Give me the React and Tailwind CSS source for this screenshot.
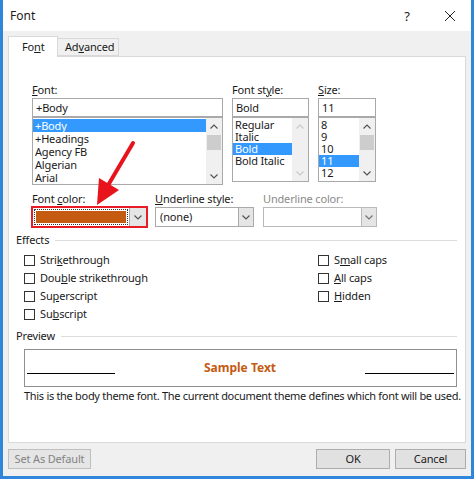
import React from "react";

const font = "font-['Noto_Sans',sans-serif]";

function Chevron({ dir = "down", color = "#505050" }) {
  return (
    <svg width="8" height="5" viewBox="0 0 8 5">
      <polyline
        points={dir === "down" ? "0.5,0.5 4,4 7.5,0.5" : "0.5,4.5 4,1 7.5,4.5"}
        fill="none"
        stroke={color}
        strokeWidth="1.1"
      />
    </svg>
  );
}

function Scrollbar({ thumb, disabled }) {
  const c = disabled ? "#c8c8c8" : "#505050";
  return (
    <div className="w-[16px] h-full shrink-0 bg-[#f0f0f0] flex flex-col">
      <div className="h-[17px] flex items-center justify-center">
        <Chevron dir="up" color={c} />
      </div>
      {thumb ? <div className="mx-px h-[15px] bg-[#cdcdcd]" /> : null}
      <div className="flex-1" />
      <div className="h-[15px] flex items-center justify-center">
        <Chevron dir="down" color={c} />
      </div>
    </div>
  );
}

function ListBox({ items, selected, height, leading, thumb, disabled }) {
  return (
    <div className={`flex border border-[#a9a9a9] bg-white ${height}`}>
      <div className="flex-1 min-w-0 pt-[1px] overflow-hidden whitespace-nowrap">
        {items.map((it) => (
          <div key={it} className={`${leading} pl-[2px] ${it === selected ? "bg-[#3399ff] text-white" : ""}`}>
            {it}
          </div>
        ))}
      </div>
      <Scrollbar thumb={thumb} disabled={disabled} />
    </div>
  );
}

function Check({ children }) {
  return (
    <div className="h-[18px] flex items-center">
      <div className="w-[11px] h-[11px] border border-[#333] bg-white" />
      <span className="ml-[5px]">{children}</span>
    </div>
  );
}

function Group({ title }) {
  return (
    <div className="flex items-center h-[14px] pl-[7px] pr-[8px]">
      <span>{title}</span>
      <div className="flex-1 ml-[6px] h-px bg-[#dcdcdc]" />
    </div>
  );
}

export default function App() {
  return (
    <div className={`relative w-[474px] h-[479px] bg-[#f0f0f0] border-x-[3px] border-b-[3px] border-[#2f86db] text-[11px] leading-[14px] tracking-[-0.16px] text-[#1a1a1a] ${font} flex flex-col`}>
      {/* title bar */}
      <div className="h-[31px] bg-white flex items-center shrink-0">
        <span className="ml-[7px] text-[12px] tracking-normal">Font</span>
        <span className="ml-auto w-[14px] text-center text-[13px]">?</span>
        <svg className="ml-[29px] mr-[14px]" width="14" height="14" viewBox="0 0 14 14">
          <path d="M2 2 L12 12 M12 2 L2 12" stroke="#222" strokeWidth="1" />
        </svg>
      </div>

      {/* tabs */}
      <div className="flex items-end pl-[5px] pt-[5px] h-[25px] shrink-0">
        <div className="relative z-10 -mb-px h-[21px] w-[50px] bg-white border border-b-0 border-[#d9d9d9] pl-[13px] pt-[3px]">
          Fo<u>n</u>t
        </div>
        <div className="h-[18px] w-[61px] bg-[#f0f0f0] border border-l-0 border-[#d9d9d9] pl-[7px] pt-[1px]">
          Ad<u>v</u>anced
        </div>
      </div>

      {/* panel */}
      <div className="ml-[5px] w-[458px] h-[387px] shrink-0 bg-white border border-[#d9d9d9] flex flex-col">
        {/* row 1 */}
        <div className="flex pl-[23px] pt-[26px]">
          <div className="w-[191px] flex flex-col">
            <span className="h-[14px] mb-px"><u>F</u>ont:</span>
            <div className="h-[19px] border border-[#a9a9a9] pl-[3px] flex items-center">+Body</div>
            <ListBox
              items={["+Body", "+Headings", "Agency FB", "Algerian", "Arial"]}
              selected="+Body"
              height="h-[68px]"
              leading="h-[13px] leading-[13px]"
              thumb
            />
          </div>
          <div className="ml-[9px] w-[77px] flex flex-col">
            <span className="h-[14px] mb-px">Font st<u>y</u>le:</span>
            <div className="h-[19px] border border-[#a9a9a9] pl-[3px] flex items-center">Bold</div>
            <ListBox
              items={["Regular", "Italic", "Bold", "Bold Italic"]}
              selected="Bold"
              height="h-[65px]"
              leading="h-[12px] leading-[12px]"
              disabled
            />
          </div>
          <div className="ml-[9px] w-[58px] flex flex-col">
            <span className="h-[14px] mb-px"><u>S</u>ize:</span>
            <div className="h-[19px] border border-[#a9a9a9] pl-[3px] flex items-center">11</div>
            <ListBox
              items={["8", "9", "10", "11", "12"]}
              selected="11"
              height="h-[65px]"
              leading="h-[12px] leading-[12px]"
              thumb
            />
          </div>
        </div>

        {/* row 2 */}
        <div className="flex items-end pl-[22px] mt-[7px]">
          <div className="w-[117px] flex flex-col">
            <span className="h-[14px] pl-px">Font <u>c</u>olor:</span>
            <div className="h-[22px] border-2 border-[#e81c24] flex">
              <div className="flex-1 p-[1px]">
                <div className="h-full border border-dotted border-[#333] p-px">
                  <div className="h-full bg-[#c55a11]" />
                </div>
              </div>
              <div className="w-[17px] bg-[#e5e5e5] border-l border-[#a9a9a9] flex items-center justify-center">
                <Chevron />
              </div>
            </div>
          </div>
          <div className="ml-[7px] w-[99px] flex flex-col mb-px">
            <span className="h-[14px] mb-px"><u>U</u>nderline style:</span>
            <div className="h-[20px] border border-[#a9a9a9] flex">
              <span className="flex-1 pl-[4px] flex items-center">(none)</span>
              <div className="w-[15px] bg-[#e5e5e5] border-l border-[#a9a9a9] flex items-center justify-center">
                <Chevron />
              </div>
            </div>
          </div>
          <div className="ml-[9px] w-[114px] flex flex-col mb-px">
            <span className="h-[14px] mb-px text-[#8a8a8a]">Underline color:</span>
            <div className="h-[20px] border border-[#b9b9b9] flex">
              <span className="flex-1" />
              <div className="w-[15px] bg-[#e5e5e5] border-l border-[#b9b9b9] flex items-center justify-center">
                <Chevron color="#707070" />
              </div>
            </div>
          </div>
        </div>

        {/* effects */}
        <div className="mt-[5px]">
          <Group title="Effects" />
        </div>
        <div className="flex mt-[4px] pl-[15px]">
          <div className="w-[294px] flex flex-col">
            <Check>Stri<u>k</u>ethrough</Check>
            <Check>Dou<u>b</u>le strikethrough</Check>
            <Check>Su<u>p</u>erscript</Check>
            <Check>Su<u>b</u>script</Check>
          </div>
          <div className="flex flex-col">
            <Check>S<u>m</u>all caps</Check>
            <Check><u>A</u>ll caps</Check>
            <Check><u>H</u>idden</Check>
          </div>
        </div>

        {/* preview */}
        <div className="mt-[6px]">
          <Group title="Preview" />
        </div>
        <div className="ml-[15px] mt-[6px] w-[433px] h-[38px] border border-[#8f8f8f] flex items-end pb-[12px] px-[2px]">
          <div className="w-[88px] h-px bg-black" />
          <div className="flex-1 text-center font-bold text-[12px] leading-[14px] tracking-normal text-[#c55a11] mb-[-1px]">Sample Text</div>
          <div className="w-[89px] h-px bg-black" />
        </div>
        <div className="ml-[15px] mt-[2px] h-[14px] whitespace-nowrap tracking-[-0.3px]">
          This is the body theme font. The current document theme defines which font will be used.
        </div>
      </div>

      {/* buttons */}
      <div className="mt-[6px] ml-[5px] w-[458px] flex">
        <div className="w-[83px] h-[20px] border border-[#bfbfbf] bg-[#e5e5e5] text-[#838383] flex items-center justify-center">
          Set As Default
        </div>
        <div className="ml-auto w-[74px] h-[20px] border border-[#adadad] bg-[#e1e1e1] flex items-center justify-center">
          OK
        </div>
        <div className="ml-[5px] w-[71px] h-[20px] border border-[#adadad] bg-[#e1e1e1] flex items-center justify-center">
          Cancel
        </div>
      </div>

      {/* annotation arrow */}
      <svg className="absolute left-[-3px] top-0 pointer-events-none" width="474" height="479" viewBox="0 0 474 479">
        <line x1="133" y1="143" x2="107" y2="187" stroke="#e8141c" strokeWidth="4" strokeLinecap="round" />
        <polygon points="97,205 99,178 119,190" fill="#e8141c" />
      </svg>
    </div>
  );
}
